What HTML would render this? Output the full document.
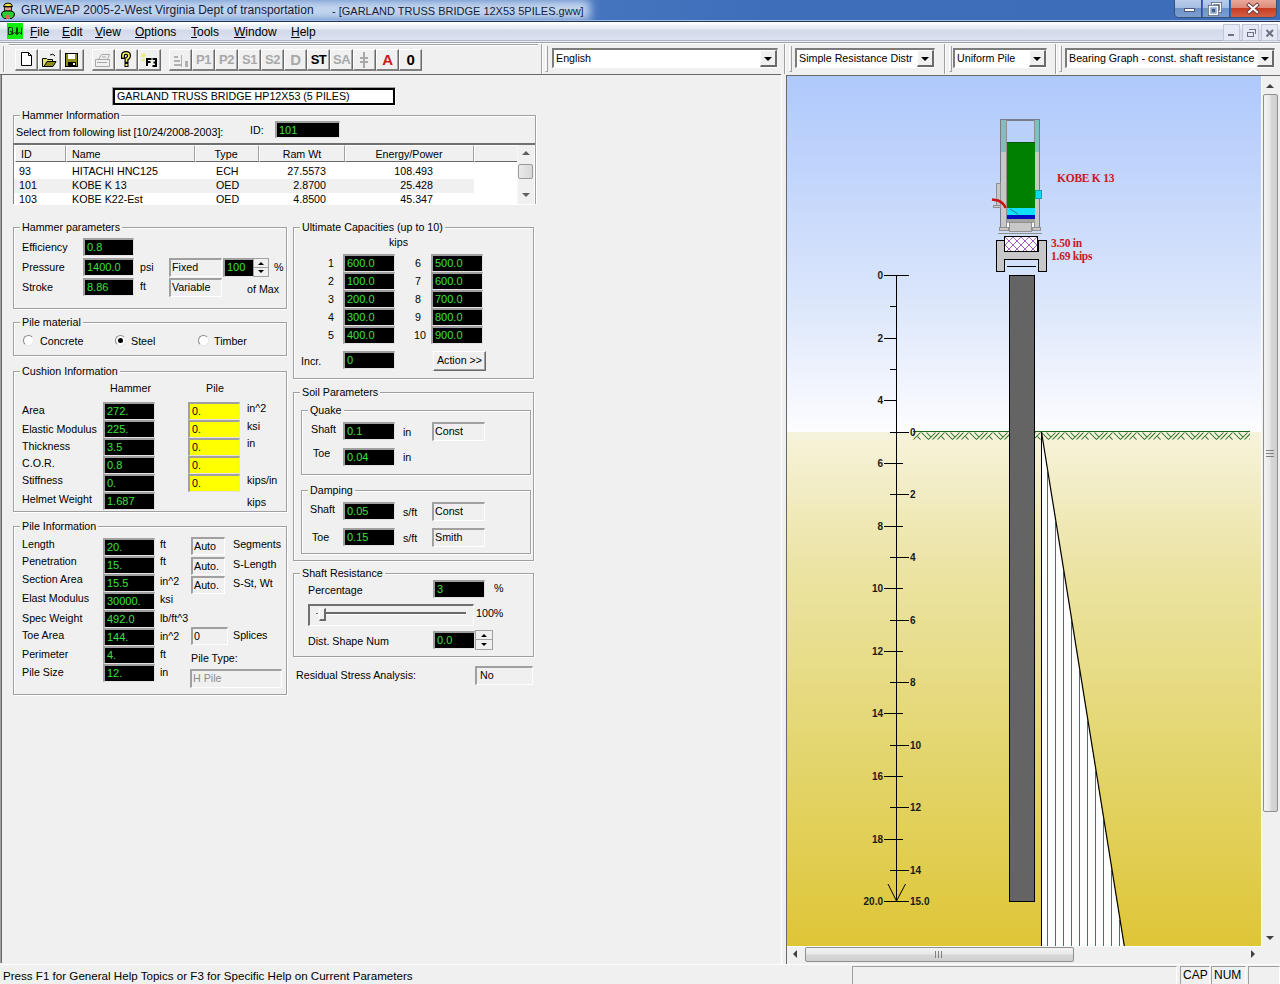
<!DOCTYPE html><html><head><meta charset="utf-8"><style>*{box-sizing:border-box;margin:0;padding:0}
html,body{width:1280px;height:984px;overflow:hidden;background:#f0f0f0;font-family:"Liberation Sans",sans-serif;font-size:10.7px;color:#000}
.a{position:absolute}
.t{position:absolute;white-space:nowrap;line-height:13px}
.btn{position:absolute;width:23px;height:22px;background:#f0f0f0;border-top:1px solid #fff;border-left:1px solid #fff;border-right:1px solid #6a6a6a;border-bottom:2px solid #808080;box-shadow:inset -1px -0px 0 #a8a8a8;font-weight:bold;font-size:14px;text-align:center;line-height:19px;color:#a8a8a8}
.blk{position:absolute;background:#000;color:#3ce13c;border-top:2px solid #a0a0a0;border-left:2px solid #a0a0a0;border-right:1px solid #e3e3e3;border-bottom:1px solid #e3e3e3;padding-left:2px;line-height:14px;font-size:11px;white-space:nowrap}
.yel{position:absolute;background:#ffff00;color:#000;border-top:2px solid #a0a0a0;border-left:2px solid #a0a0a0;border-right:1px solid #e3e3e3;border-bottom:1px solid #e3e3e3;padding-left:2px;line-height:14px;white-space:nowrap}
.gry{position:absolute;background:#f0f0f0;border-top:2px solid #a0a0a0;border-left:2px solid #a0a0a0;border-right:1px solid #fff;border-bottom:1px solid #fff;padding-left:1px;line-height:14px;white-space:nowrap}
.grp{position:absolute;border:1px solid #a0a0a0;box-shadow:1px 1px 0 #fff, inset 1px 1px 0 #fff}
.lg{position:absolute;background:#f0f0f0;padding:0 2px;line-height:13px;white-space:nowrap}
.combo{position:absolute;height:20px;background:#fff;border-top:2px solid #7c7c7c;border-left:2px solid #7c7c7c;border-right:1px solid #f4f4f4;border-bottom:1px solid #fff;font-size:10.7px;line-height:16px;padding-left:2px;white-space:nowrap;overflow:hidden}
.dd{position:absolute;right:0;top:0;width:17px;height:17px;background:#f0f0f0;border-top:1px solid #fff;border-left:1px solid #fff;border-right:2px solid #6a6a6a;border-bottom:2px solid #6a6a6a}
.dd:after{content:"";position:absolute;left:3px;top:6px;border-left:4px solid transparent;border-right:4px solid transparent;border-top:4px solid #000}
.mi{position:absolute;top:25px;font-size:12px;line-height:15px;white-space:nowrap}
.mi u{text-decoration:underline}
</style></head><body>
<div class="a" style="left:0;top:0;width:1280px;height:20px;background:linear-gradient(90deg,#6d93cf 0,#4f7dc4 30%,#3e6eba 60%,#3d6cb8 100%)"></div>
<div class="a" style="left:-20px;top:0px;width:610px;height:20px;background:#c3d5ee;filter:blur(5px)"></div>
<div class="a" style="left:0;top:20px;width:1280px;height:1px;background:#9cbcec"></div>
<div class="a" style="left:0;top:21px;width:1280px;height:1px;background:#26344f"></div>
<svg class="a" style="left:0;top:0" width="18" height="20" viewBox="0 0 18 20"><path d="M3.5 6.5Q4 3 8 3Q12 3 12.5 6.5Z" fill="#f0e040" stroke="#000"/><rect x="4.5" y="7" width="7" height="4" fill="#e8a090" stroke="#000" stroke-width="0.8"/><path d="M1.5 14Q2 11 5 11H11Q14 11 14.5 14Q14.5 17 11.5 18.5H4.5Q1.5 17 1.5 14Z" fill="#22d030" stroke="#000"/><rect x="6" y="15" width="4" height="4" fill="#e06060"/></svg>
<div class="t" style="left:21px;top:3px;font-size:12px;line-height:15px;color:#15203a">GRLWEAP 2005-2-West Virginia Dept of transportation</div>
<div class="t" style="left:332px;top:4px;font-size:11px;line-height:15px;color:#15203a">- [GARLAND TRUSS BRIDGE 12X53 5PILES.gww]</div>
<div class="a" style="left:1174px;top:0;width:103px;height:18px;border:1px solid #3a4f74;border-top:none;border-radius:0 0 5px 5px;overflow:hidden"><div class="a" style="left:0;top:0;width:27px;height:17px;background:linear-gradient(#b9cdea 0,#a6bee2 45%,#6f93c8 50%,#7c9fd2 100%);border-right:1px solid #3a4f74"></div><div class="a" style="left:28px;top:0;width:27px;height:17px;background:linear-gradient(#b9cdea 0,#a6bee2 45%,#6f93c8 50%,#7c9fd2 100%);border-right:1px solid #3a4f74"></div><div class="a" style="left:56px;top:0;width:47px;height:17px;background:linear-gradient(#e9a89a 0,#de8a7a 45%,#c83c22 50%,#d56048 100%)"></div><div class="a" style="left:9px;top:8px;width:11px;height:4px;background:#fff;border:1px solid #4a5a78"></div><svg class="a" style="left:32px;top:1px" width="16" height="15"><rect x="5.5" y="2.5" width="8" height="8" fill="none" stroke="#4a5a78" stroke-width="3"/><rect x="5.5" y="2.5" width="8" height="8" fill="none" stroke="#fff" stroke-width="1.5"/><rect x="2.5" y="5.5" width="8" height="8" fill="#8aa6d2" stroke="#4a5a78" stroke-width="3"/><rect x="2.5" y="5.5" width="8" height="8" fill="#8aa6d2" stroke="#fff" stroke-width="1.5"/><rect x="5" y="8" width="3" height="3" fill="#4a5a78"/></svg><svg class="a" style="left:70px;top:1px" width="16" height="15"><path d="M4 4L12 11M12 4L4 11" stroke="#6a3a3a" stroke-width="4" stroke-linecap="square"/><path d="M4 4L12 11M12 4L4 11" stroke="#fff" stroke-width="2.2" stroke-linecap="square"/></svg></div>
<div class="a" style="left:0;top:22px;width:1280px;height:18px;background:linear-gradient(#fff 0,#fff 2px,#eef2fa 3px,#e6eaf4 7px,#d4d9e9 8px,#dde2f3 100%)"></div>
<div class="a" style="left:0;top:40px;width:1280px;height:1px;background:#b0b4c2"></div>
<div class="a" style="left:0;top:41px;width:1280px;height:1px;background:#eceef4"></div>
<div class="a" style="left:0;top:42px;width:1280px;height:1px;background:#a0a0a8"></div>
<svg class="a" style="left:7px;top:23px" width="16" height="16" viewBox="0 0 16 16"><rect width="16" height="16" fill="#10ee10"/><path d="M4.5 4.5H1.5V11.5H4.5V8.5H3M5.5 4.5V11.5L7.5 9L9.5 11.5V4.5M10.5 4.5V11.5L12.5 9L14.5 11.5V4.5" fill="none" stroke="#0a3a0a" stroke-width="1"/></svg>
<div class="mi" style="left:30px"><u>F</u>ile</div>
<div class="mi" style="left:62px"><u>E</u>dit</div>
<div class="mi" style="left:95px"><u>V</u>iew</div>
<div class="mi" style="left:135px"><u>O</u>ptions</div>
<div class="mi" style="left:191px"><u>T</u>ools</div>
<div class="mi" style="left:234px"><u>W</u>indow</div>
<div class="mi" style="left:291px"><u>H</u>elp</div>
<div class="a" style="left:1223px;top:24px;width:17px;height:17px;border:1px solid #c0c8d8;background:#e4e9f5"></div>
<div class="a" style="left:1242px;top:24px;width:17px;height:17px;border:1px solid #c0c8d8;background:#e4e9f5"></div>
<div class="a" style="left:1261px;top:24px;width:17px;height:17px;border:1px solid #c0c8d8;background:#e4e9f5"></div>
<div class="a" style="left:1228px;top:34px;width:6px;height:2px;background:#6a7283"></div>
<div class="a" style="left:1247px;top:32px;width:7px;height:5px;border:1px solid #6a7283"></div><div class="a" style="left:1249px;top:29px;width:7px;height:5px;border-top:1px solid #6a7283;border-right:1px solid #6a7283"></div>
<svg class="a" style="left:1263px;top:26px" width="14" height="14"><path d="M3.5 4L10 10.5M10 4L3.5 10.5" stroke="#6a7283" stroke-width="2"/></svg>
<div class="a" style="left:0;top:43px;width:1280px;height:31px;background:#f0f0f0;border-top:1px solid #fff"></div>
<div class="a" style="left:9px;top:44px;width:529px;height:2px;border-top:1px solid #a0a0a0;border-bottom:1px solid #fff"></div>
<div class="a" style="left:3px;top:46px;width:2px;height:26px;border-left:1px solid #a0a0a0;border-right:1px solid #fff"></div>
<div class="btn" style="left:15px;top:49px"></div>
<div class="btn" style="left:38px;top:49px"></div>
<div class="btn" style="left:61px;top:49px"></div>
<div class="btn" style="left:92px;top:49px"></div>
<div class="btn" style="left:115px;top:49px"></div>
<div class="btn" style="left:138px;top:49px"></div>
<div class="btn" style="left:169px;top:49px;color:#a8a8a8;font-size:15px;letter-spacing:-0.5px"></div>
<div class="btn" style="left:192px;top:49px;color:#a8a8a8;font-size:13px;letter-spacing:-0.5px">P1</div>
<div class="btn" style="left:215px;top:49px;color:#a8a8a8;font-size:13px;letter-spacing:-0.5px">P2</div>
<div class="btn" style="left:238px;top:49px;color:#a8a8a8;font-size:13px;letter-spacing:-0.5px">S1</div>
<div class="btn" style="left:261px;top:49px;color:#a8a8a8;font-size:13px;letter-spacing:-0.5px">S2</div>
<div class="btn" style="left:284px;top:49px;color:#a8a8a8;font-size:15px;letter-spacing:-0.5px">D</div>
<div class="btn" style="left:307px;top:49px;color:#000;font-size:13px;letter-spacing:-0.5px">ST</div>
<div class="btn" style="left:330px;top:49px;color:#a8a8a8;font-size:13px;letter-spacing:-0.5px">SA</div>
<div class="btn" style="left:353px;top:49px;color:#a8a8a8;font-size:15px;letter-spacing:-0.5px"></div>
<div class="btn" style="left:376px;top:49px;color:#d01818;font-size:15px;letter-spacing:-0.5px">A</div>
<div class="btn" style="left:399px;top:49px;color:#000;font-size:15px;letter-spacing:-0.5px">0</div>
<svg class="a" style="left:15px;top:49px" width="184" height="22" viewBox="0 0 184 22"><path d="M6.5 3.5H13.5L16.5 6.5V16.5H6.5Z" fill="#fff" stroke="#000"/><path d="M13.5 3.5V6.5H16.5" fill="none" stroke="#000"/><path d="M27.5 9.5h4l1 1h5v7h-10z" fill="#e0e07c" stroke="#000"/><path d="M29 17.5l3-5h9l-3 5z" fill="#8c8c1c" stroke="#000"/><path d="M35 6q3-2 5 1" stroke="#000" fill="none"/><rect x="50.5" y="4.5" width="12" height="13" fill="#8c8c1c" stroke="#000"/><rect x="53" y="5" width="7" height="5" fill="#fff"/><rect x="53" y="13" width="8" height="4" fill="#000"/><rect x="58" y="14" width="2" height="2" fill="#fff"/><g fill="none" stroke="#a8a8a8" stroke-width="1"><path d="M83.5 10.5L86.5 5.5H94.5L92.5 10.5"/><path d="M80.5 10.5H94.5V17.5H80.5Z"/><path d="M82 13.5H92M87 8H91"/></g><path d="M108 8V6.5Q108 4 111 4Q114 4 114 6.5Q114 9 111.5 10V12" fill="none" stroke="#000" stroke-width="4" stroke-linecap="square"/><rect x="109.5" y="14" width="4" height="4" fill="#000"/><path d="M108 8V6.5Q108 4 111 4Q114 4 114 6.5Q114 9 111.5 10V12" fill="none" stroke="#f4f460" stroke-width="1.6" stroke-linecap="square"/><rect x="110.5" y="15" width="2" height="2" fill="#f4f460"/><circle cx="128.5" cy="6.5" r="2.2" fill="#e8ec60" opacity="0.8"/><circle cx="128.5" cy="11" r="1.6" fill="#e8ec60" opacity="0.8"/><path d="M132 17V10H136.5M132 13H135.5" fill="none" stroke="#000" stroke-width="2"/><path d="M137.5 10H141V17H137.5M138.5 13.5H141" fill="none" stroke="#000" stroke-width="2"/><rect x="159" y="7" width="4" height="2" fill="#b0b0b0"/><rect x="159" y="11" width="6" height="2" fill="#b0b0b0"/><rect x="159" y="15" width="8" height="2" fill="#b0b0b0"/><rect x="166" y="6" width="1" height="12" fill="#b0b0b0"/><rect x="170" y="12" width="3" height="6" fill="#b0b0b0"/></svg>
<svg class="a" style="left:353px;top:49px" width="23" height="22"><rect x="10" y="3" width="2" height="16" fill="#a8a8a8"/><rect x="7" y="8" width="8" height="2" fill="#a8a8a8"/><rect x="7" y="12" width="8" height="2" fill="#a8a8a8"/></svg>
<div class="a" style="left:541px;top:44px;width:2px;height:30px;border-left:1px solid #a0a0a0;border-right:1px solid #fff"></div>
<div class="a" style="left:545px;top:46px;width:3px;height:26px;border-left:1px solid #fff;border-right:1px solid #a0a0a0;border-bottom:1px solid #a0a0a0"></div>
<div class="a" style="left:784px;top:44px;width:2px;height:30px;border-left:1px solid #a0a0a0;border-right:1px solid #fff"></div>
<div class="a" style="left:789px;top:46px;width:3px;height:26px;border-left:1px solid #fff;border-right:1px solid #a0a0a0;border-bottom:1px solid #a0a0a0"></div>
<div class="a" style="left:944px;top:44px;width:2px;height:30px;border-left:1px solid #a0a0a0;border-right:1px solid #fff"></div>
<div class="a" style="left:949px;top:46px;width:3px;height:26px;border-left:1px solid #fff;border-right:1px solid #a0a0a0;border-bottom:1px solid #a0a0a0"></div>
<div class="a" style="left:1055px;top:44px;width:2px;height:30px;border-left:1px solid #a0a0a0;border-right:1px solid #fff"></div>
<div class="a" style="left:1059px;top:46px;width:3px;height:26px;border-left:1px solid #fff;border-right:1px solid #a0a0a0;border-bottom:1px solid #a0a0a0"></div>
<div class="combo" style="left:552px;top:48px;width:226px">English<div class="dd"></div></div>
<div class="combo" style="left:795px;top:48px;width:140px">Simple Resistance Distr<div class="dd"></div></div>
<div class="combo" style="left:953px;top:48px;width:94px">Uniform Pile<div class="dd"></div></div>
<div class="combo" style="left:1065px;top:48px;width:210px">Bearing Graph - const. shaft resistance<div class="dd"></div></div>
<div class="a" style="left:0;top:74px;width:781px;height:1px;background:#696969"></div>
<div class="a" style="left:0;top:964px;width:1280px;height:20px;background:#f0f0f0;border-top:1px solid #fff"></div>
<div class="t" style="left:3px;top:968px;font-size:11.6px;line-height:15px">Press F1 for General Help Topics or F3 for Specific Help on Current Parameters</div>
<div class="a" style="left:852px;top:966px;width:325px;height:18px;border-top:1px solid #a0a0a0;border-left:1px solid #a0a0a0;border-right:1px solid #fff;font-size:12px;line-height:17px;padding-left:2px"></div>
<div class="a" style="left:1180px;top:966px;width:30px;height:18px;border-top:1px solid #a0a0a0;border-left:1px solid #a0a0a0;border-right:1px solid #fff;font-size:12px;line-height:17px;padding-left:2px">CAP</div>
<div class="a" style="left:1211px;top:966px;width:35px;height:18px;border-top:1px solid #a0a0a0;border-left:1px solid #a0a0a0;border-right:1px solid #fff;font-size:12px;line-height:17px;padding-left:2px">NUM</div>
<div class="a" style="left:1248px;top:966px;width:32px;height:18px;border-top:1px solid #a0a0a0;border-left:1px solid #a0a0a0;border-right:1px solid #fff;font-size:12px;line-height:17px;padding-left:2px"></div>
<div class="a" style="left:0;top:75px;width:1px;height:888px;background:#a0a0a0"></div>
<div class="a" style="left:1px;top:75px;width:1px;height:888px;background:#696969"></div>
<div class="a" style="left:112px;top:87px;width:284px;height:19px;border-top:1px solid #a0a0a0;border-left:1px solid #a0a0a0;border-right:1px solid #fff;border-bottom:1px solid #fff"><div class="a" style="left:0;top:0;width:282px;height:17px;background:#fff;border:2px solid #000;border-top-width:2px;padding-left:2px;line-height:13px;white-space:nowrap">GARLAND TRUSS BRIDGE HP12X53 (5 PILES)</div></div>
<div class="grp" style="left:13px;top:115px;width:523px;height:89px"></div>
<div class="lg" style="left:20px;top:109px">Hammer Information</div>
<div class="t" style="left:16px;top:125.6px;">Select from following list [10/24/2008-2003]:</div>
<div class="t" style="left:250px;top:124px;">ID:</div>
<div class="blk" style="left:275px;top:121px;width:65px;height:17px;">101</div>
<div class="a" style="left:13px;top:143px;width:522px;height:61px;background:#fff;border-top:2px solid #707070;border-left:1px solid #808080;overflow:hidden"><div class="a" style="left:0;top:34px;width:460px;height:14px;background:#f0f0f0"></div></div>
<div class="a" style="left:15px;top:145px;width:51px;height:17px;background:#f0f0f0;border-top:1px solid #fff;border-left:1px solid #fff;border-right:1px solid #a0a0a0;border-bottom:1px solid #696969"></div>
<div class="t" style="left:21px;top:148px;">ID</div>
<div class="a" style="left:66px;top:145px;width:129px;height:17px;background:#f0f0f0;border-top:1px solid #fff;border-left:1px solid #fff;border-right:1px solid #a0a0a0;border-bottom:1px solid #696969"></div>
<div class="t" style="left:72px;top:148px;">Name</div>
<div class="a" style="left:195px;top:145px;width:64px;height:17px;background:#f0f0f0;border-top:1px solid #fff;border-left:1px solid #fff;border-right:1px solid #a0a0a0;border-bottom:1px solid #696969"></div>
<div class="t" style="left:226px;top:148px;transform:translateX(-50%)">Type</div>
<div class="a" style="left:259px;top:145px;width:86px;height:17px;background:#f0f0f0;border-top:1px solid #fff;border-left:1px solid #fff;border-right:1px solid #a0a0a0;border-bottom:1px solid #696969"></div>
<div class="t" style="left:302px;top:148px;transform:translateX(-50%)">Ram Wt</div>
<div class="a" style="left:345px;top:145px;width:129px;height:17px;background:#f0f0f0;border-top:1px solid #fff;border-left:1px solid #fff;border-right:1px solid #a0a0a0;border-bottom:1px solid #696969"></div>
<div class="t" style="left:409px;top:148px;transform:translateX(-50%)">Energy/Power</div>
<div class="a" style="left:474px;top:145px;width:44px;height:17px;background:#f0f0f0;border-top:1px solid #fff;border-left:1px solid #fff;border-right:1px solid #a0a0a0;border-bottom:1px solid #696969"></div>
<div class="t" style="left:19px;top:165px;">93</div>
<div class="t" style="left:72px;top:165px;">HITACHI HNC125</div>
<div class="t" style="left:216px;top:165px;">ECH</div>
<div class="t" style="left:0;top:165px;width:326px;text-align:right">27.5573</div>
<div class="t" style="left:0;top:165px;width:433px;text-align:right">108.493</div>
<div class="t" style="left:19px;top:179px;">101</div>
<div class="t" style="left:72px;top:179px;">KOBE K 13</div>
<div class="t" style="left:216px;top:179px;">OED</div>
<div class="t" style="left:0;top:179px;width:326px;text-align:right">2.8700</div>
<div class="t" style="left:0;top:179px;width:433px;text-align:right">25.428</div>
<div class="t" style="left:19px;top:193px;">103</div>
<div class="t" style="left:72px;top:193px;">KOBE K22-Est</div>
<div class="t" style="left:216px;top:193px;">OED</div>
<div class="t" style="left:0;top:193px;width:326px;text-align:right">4.8500</div>
<div class="t" style="left:0;top:193px;width:433px;text-align:right">45.347</div>
<div class="a" style="left:517px;top:145px;width:17px;height:59px;background:#f0f0f0;border-left:1px solid #f8f8f8"></div>
<div class="a" style="left:522px;top:151px;width:0;height:0;border-left:4px solid transparent;border-right:4px solid transparent;border-bottom:4px solid #606060"></div>
<div class="a" style="left:518px;top:164px;width:15px;height:15px;background:linear-gradient(90deg,#eaeaea,#d8d8d8);border:1px solid #9a9a9a;border-radius:2px"></div>
<div class="a" style="left:522px;top:193px;width:0;height:0;border-left:4px solid transparent;border-right:4px solid transparent;border-top:4px solid #606060"></div>
<div class="grp" style="left:13px;top:227px;width:274px;height:82px"></div>
<div class="lg" style="left:20px;top:221px">Hammer parameters</div>
<div class="t" style="left:22px;top:241px;">Efficiency</div>
<div class="blk" style="left:83px;top:238px;width:51px;height:18px;">0.8</div>
<div class="t" style="left:22px;top:261.4px;">Pressure</div>
<div class="blk" style="left:83px;top:258px;width:51px;height:18px;">1400.0</div>
<div class="t" style="left:140px;top:261.4px;">psi</div>
<div class="t" style="left:22px;top:281.3px;">Stroke</div>
<div class="blk" style="left:83px;top:278px;width:51px;height:18px;">8.86</div>
<div class="t" style="left:140px;top:279.7px;">ft</div>
<div class="gry" style="left:169px;top:258px;width:53px;height:19px;">Fixed</div>
<div class="gry" style="left:169px;top:278px;width:53px;height:19px;">Variable</div>
<div class="blk" style="left:223px;top:258px;width:31px;height:19px;">100</div>
<div class="a" style="left:253px;top:258px;width:16px;height:19px;background:#f0f0f0;border:1px solid #a0a0a0"></div>
<div class="a" style="left:254px;top:267px;width:14px;height:1px;background:#a0a0a0"></div>
<div class="a" style="left:258px;top:262px;border-left:3px solid transparent;border-right:3px solid transparent;border-bottom:3px solid #000"></div>
<div class="a" style="left:258px;top:270px;border-left:3px solid transparent;border-right:3px solid transparent;border-top:3px solid #000"></div>
<div class="t" style="left:274px;top:261px;">%</div>
<div class="t" style="left:247px;top:282.7px;">of Max</div>
<div class="grp" style="left:13px;top:322px;width:274px;height:34px"></div>
<div class="lg" style="left:20px;top:316px">Pile material</div>
<div class="a" style="left:23px;top:335px;width:11px;height:11px;border-radius:50%;background:#fff;border:1px solid;border-color:#8a8a8a #e8e8e8 #e8e8e8 #8a8a8a;transform:rotate(0deg)"></div>
<div class="t" style="left:40px;top:334.8px;">Concrete</div>
<div class="a" style="left:115px;top:335px;width:11px;height:11px;border-radius:50%;background:#fff;border:1px solid;border-color:#8a8a8a #e8e8e8 #e8e8e8 #8a8a8a;transform:rotate(0deg)"></div>
<div class="a" style="left:118px;top:338px;width:5px;height:5px;border-radius:50%;background:#000"></div>
<div class="t" style="left:131px;top:334.8px;">Steel</div>
<div class="a" style="left:198px;top:335px;width:11px;height:11px;border-radius:50%;background:#fff;border:1px solid;border-color:#8a8a8a #e8e8e8 #e8e8e8 #8a8a8a;transform:rotate(0deg)"></div>
<div class="t" style="left:214px;top:334.8px;">Timber</div>
<div class="grp" style="left:13px;top:371px;width:274px;height:141px"></div>
<div class="lg" style="left:20px;top:365px">Cushion Information</div>
<div class="t" style="left:110px;top:381.6px;">Hammer</div>
<div class="t" style="left:206px;top:381.6px;">Pile</div>
<div class="t" style="left:22px;top:404.4px;">Area</div>
<div class="blk" style="left:103px;top:402px;width:52px;height:18px;">272.</div>
<div class="yel" style="left:188px;top:402px;width:52px;height:18px;">0.</div>
<div class="t" style="left:22px;top:422.6px;">Elastic Modulus</div>
<div class="blk" style="left:103px;top:420px;width:52px;height:18px;">225.</div>
<div class="yel" style="left:188px;top:420px;width:52px;height:18px;">0.</div>
<div class="t" style="left:22px;top:440.2px;">Thickness</div>
<div class="blk" style="left:103px;top:438px;width:52px;height:18px;">3.5</div>
<div class="yel" style="left:188px;top:438px;width:52px;height:18px;">0.</div>
<div class="t" style="left:22px;top:456.6px;">C.O.R.</div>
<div class="blk" style="left:103px;top:456px;width:52px;height:18px;">0.8</div>
<div class="yel" style="left:188px;top:456px;width:52px;height:18px;">0.</div>
<div class="t" style="left:22px;top:474.2px;">Stiffness</div>
<div class="blk" style="left:103px;top:474px;width:52px;height:18px;">0.</div>
<div class="yel" style="left:188px;top:474px;width:52px;height:18px;">0.</div>
<div class="t" style="left:22px;top:493.4px;">Helmet Weight</div>
<div class="blk" style="left:103px;top:492px;width:52px;height:18px;">1.687</div>
<div class="t" style="left:247px;top:402px;">in^2</div>
<div class="t" style="left:247px;top:419.6px;">ksi</div>
<div class="t" style="left:247px;top:437.2px;">in</div>
<div class="t" style="left:247px;top:474.2px;">kips/in</div>
<div class="t" style="left:247px;top:495.8px;">kips</div>
<div class="grp" style="left:13px;top:526px;width:274px;height:169px"></div>
<div class="lg" style="left:20px;top:520px">Pile Information</div>
<div class="t" style="left:22px;top:537.8px;">Length</div>
<div class="blk" style="left:103px;top:538px;width:52px;height:18px;">20.</div>
<div class="t" style="left:160px;top:537.8px;">ft</div>
<div class="t" style="left:22px;top:555.4px;">Penetration</div>
<div class="blk" style="left:103px;top:556px;width:52px;height:18px;">15.</div>
<div class="t" style="left:160px;top:555.4px;">ft</div>
<div class="t" style="left:22px;top:573.4px;">Section Area</div>
<div class="blk" style="left:103px;top:574px;width:52px;height:18px;">15.5</div>
<div class="t" style="left:160px;top:575.3px;">in^2</div>
<div class="t" style="left:22px;top:591.7px;">Elast Modulus</div>
<div class="blk" style="left:103px;top:592px;width:52px;height:18px;">30000.</div>
<div class="t" style="left:160px;top:592.9px;">ksi</div>
<div class="t" style="left:22px;top:611.6px;">Spec Weight</div>
<div class="blk" style="left:103px;top:610px;width:52px;height:18px;">492.0</div>
<div class="t" style="left:160px;top:611.6px;">lb/ft^3</div>
<div class="t" style="left:22px;top:628.5px;">Toe Area</div>
<div class="blk" style="left:103px;top:628px;width:52px;height:18px;">144.</div>
<div class="t" style="left:160px;top:630.4px;">in^2</div>
<div class="t" style="left:22px;top:648.4px;">Perimeter</div>
<div class="blk" style="left:103px;top:646px;width:52px;height:18px;">4.</div>
<div class="t" style="left:160px;top:648.4px;">ft</div>
<div class="t" style="left:22px;top:666.2px;">Pile Size</div>
<div class="blk" style="left:103px;top:664px;width:52px;height:18px;">12.</div>
<div class="t" style="left:160px;top:666.2px;">in</div>
<div class="gry" style="left:191px;top:537px;width:34px;height:18px;">Auto</div>
<div class="t" style="left:233px;top:537.8px;">Segments</div>
<div class="gry" style="left:191px;top:557px;width:34px;height:18px;">Auto.</div>
<div class="t" style="left:233px;top:557.7px;">S-Length</div>
<div class="gry" style="left:191px;top:576px;width:34px;height:18px;">Auto.</div>
<div class="t" style="left:233px;top:576.5px;">S-St, Wt</div>
<div class="gry" style="left:191px;top:627px;width:37px;height:18px;">0</div>
<div class="t" style="left:233px;top:628.7px;">Splices</div>
<div class="t" style="left:191px;top:651.5px;">Pile Type:</div>
<div class="gry" style="left:190px;top:669px;width:92px;height:19px;color:#8c8c8c">H Pile</div>
<div class="grp" style="left:293px;top:227px;width:241px;height:152px"></div>
<div class="lg" style="left:300px;top:221px">Ultimate Capacities (up to 10)</div>
<div class="t" style="left:389px;top:235.5px;">kips</div>
<div class="t" style="left:328px;top:256.8px;">1</div>
<div class="blk" style="left:343px;top:254px;width:52px;height:18px;">600.0</div>
<div class="t" style="left:415px;top:256.8px;">6</div>
<div class="blk" style="left:431px;top:254px;width:52px;height:18px;">500.0</div>
<div class="t" style="left:328px;top:274.8px;">2</div>
<div class="blk" style="left:343px;top:272px;width:52px;height:18px;">100.0</div>
<div class="t" style="left:415px;top:274.8px;">7</div>
<div class="blk" style="left:431px;top:272px;width:52px;height:18px;">600.0</div>
<div class="t" style="left:328px;top:292.8px;">3</div>
<div class="blk" style="left:343px;top:290px;width:52px;height:18px;">200.0</div>
<div class="t" style="left:415px;top:292.8px;">8</div>
<div class="blk" style="left:431px;top:290px;width:52px;height:18px;">700.0</div>
<div class="t" style="left:328px;top:310.8px;">4</div>
<div class="blk" style="left:343px;top:308px;width:52px;height:18px;">300.0</div>
<div class="t" style="left:415px;top:310.8px;">9</div>
<div class="blk" style="left:431px;top:308px;width:52px;height:18px;">800.0</div>
<div class="t" style="left:328px;top:328.8px;">5</div>
<div class="blk" style="left:343px;top:326px;width:52px;height:18px;">400.0</div>
<div class="t" style="left:414px;top:328.8px;">10</div>
<div class="blk" style="left:431px;top:326px;width:52px;height:18px;">900.0</div>
<div class="t" style="left:301px;top:355px;">Incr.</div>
<div class="blk" style="left:343px;top:351px;width:52px;height:18px;">0</div>
<div class="a" style="left:433px;top:351px;width:53px;height:20px;background:#f0f0f0;border-top:1px solid #fff;border-left:1px solid #fff;border-right:1px solid #696969;border-bottom:1px solid #696969;box-shadow:inset -1px -1px 0 #a0a0a0;text-align:center;line-height:17px">Action &gt;&gt;</div>
<div class="grp" style="left:293px;top:392px;width:241px;height:169px"></div>
<div class="lg" style="left:300px;top:386px">Soil Parameters</div>
<div class="grp" style="left:301px;top:410px;width:230px;height:65px"></div>
<div class="lg" style="left:308px;top:404px">Quake</div>
<div class="t" style="left:311px;top:422.8px;">Shaft</div>
<div class="blk" style="left:343px;top:422px;width:52px;height:18px;">0.1</div>
<div class="t" style="left:403px;top:425.9px;">in</div>
<div class="gry" style="left:432px;top:422px;width:53px;height:19px;">Const</div>
<div class="t" style="left:313px;top:446.8px;">Toe</div>
<div class="blk" style="left:343px;top:448px;width:52px;height:18px;">0.04</div>
<div class="t" style="left:403px;top:450.8px;">in</div>
<div class="grp" style="left:301px;top:490px;width:230px;height:64px"></div>
<div class="lg" style="left:308px;top:484px">Damping</div>
<div class="t" style="left:310px;top:503px;">Shaft</div>
<div class="blk" style="left:343px;top:502px;width:52px;height:18px;">0.05</div>
<div class="t" style="left:403px;top:505.70000000000005px;">s/ft</div>
<div class="gry" style="left:432px;top:502px;width:53px;height:19px;">Const</div>
<div class="t" style="left:312px;top:530.5px;">Toe</div>
<div class="blk" style="left:343px;top:528px;width:52px;height:18px;">0.15</div>
<div class="t" style="left:403px;top:531.5px;">s/ft</div>
<div class="gry" style="left:432px;top:528px;width:53px;height:19px;">Smith</div>
<div class="grp" style="left:293px;top:573px;width:241px;height:84px"></div>
<div class="lg" style="left:300px;top:567px">Shaft Resistance</div>
<div class="t" style="left:308px;top:583.6px;">Percentage</div>
<div class="blk" style="left:433px;top:580px;width:52px;height:18px;">3</div>
<div class="t" style="left:494px;top:581.6px;">%</div>
<div class="a" style="left:308px;top:604px;width:166px;height:22px;border-top:2px solid #707070;border-left:2px solid #707070;border-right:1px solid #fff;border-bottom:1px solid #fff"></div>
<div class="a" style="left:316px;top:612px;width:150px;height:3px;border-top:2px solid #6a6a6a;border-bottom:1px solid #fff"></div>
<div class="a" style="left:316px;top:612px;width:3px;height:2px;background:#f0f0f0"></div>
<div class="a" style="left:316px;top:613px;width:2px;height:1px;background:#6a6a6a"></div>
<div class="a" style="left:319px;top:608px;width:7px;height:13px;background:#f0f0f0;border-top:1px solid #fff;border-left:1px solid #fff;border-right:2px solid #6a6a6a;border-bottom:2px solid #6a6a6a"></div>
<div class="t" style="left:476px;top:606.5px;">100%</div>
<div class="t" style="left:308px;top:635.4px;">Dist. Shape Num</div>
<div class="blk" style="left:433px;top:631px;width:42px;height:18px;">0.0</div>
<div class="a" style="left:475px;top:630px;width:18px;height:20px;background:#f0f0f0;border:1px solid #a0a0a0"></div>
<div class="a" style="left:476px;top:639px;width:16px;height:1px;background:#a0a0a0"></div>
<div class="a" style="left:481px;top:634px;border-left:3px solid transparent;border-right:3px solid transparent;border-bottom:3px solid #000"></div>
<div class="a" style="left:481px;top:643px;border-left:3px solid transparent;border-right:3px solid transparent;border-top:3px solid #000"></div>
<div class="t" style="left:296px;top:668.9px;">Residual Stress Analysis:</div>
<div class="gry" style="left:475px;top:666px;width:58px;height:19px;padding-left:3px">No</div>
<div class="a" style="left:781px;top:75px;width:5px;height:889px;background:#f0f0f0;border-left:1px solid #fff"></div>
<div class="a" style="left:786px;top:75px;width:494px;height:889px;border-top:1px solid #696969;border-left:1px solid #696969;background:#f0f0f0"></div>
<svg class="a" style="left:787px;top:76px" width="474" height="870" viewBox="787 76 474 870" shape-rendering="crispEdges"><defs><linearGradient id="sky" x1="0" y1="0" x2="0" y2="1"><stop offset="0" stop-color="#afc9fc"/><stop offset="0.3" stop-color="#c3d6fb"/><stop offset="0.63" stop-color="#dbe6fb"/><stop offset="1" stop-color="#fdfdff"/></linearGradient><linearGradient id="soil" x1="0" y1="0" x2="0" y2="1"><stop offset="0" stop-color="#f6f3dc"/><stop offset="0.25" stop-color="#ece4a6"/><stop offset="0.64" stop-color="#e3d56c"/><stop offset="1" stop-color="#dfc637"/></linearGradient><pattern id="hatch" x="912" y="432" width="24" height="9" patternUnits="userSpaceOnUse"><path d="M-3.5 7.5L3.5 0.5M20.5 7.5L27.5 0.5M1.5 7.5L8.5 0.5M5.5 4.5L8.5 7.5M9.5 0.5L16.5 7.5M14.5 0.5L19.5 5.5M16.5 7.5L23.5 0.5M-7.5 7.5L-0.5 0.5" stroke="#1f6a1f" stroke-width="1.05" fill="none" shape-rendering="geometricPrecision"/></pattern><pattern id="xh" x="1005" y="237" width="8" height="8" patternUnits="userSpaceOnUse"><path d="M0 0L8 8M8 0L0 8" stroke="#a060c0" stroke-width="1"/></pattern></defs><rect x="787" y="76" width="474" height="356" fill="url(#sky)"/><rect x="787" y="432" width="474" height="514" fill="url(#soil)"/><rect x="913" y="432" width="337" height="9" fill="url(#hatch)"/><line x1="913" y1="431.5" x2="1250" y2="431.5" stroke="#1d661d" stroke-width="1"/><g stroke="#000" stroke-width="1"><line x1="896.5" y1="275" x2="896.5" y2="901.5"/><line x1="884" y1="275.5" x2="909" y2="275.5"/><line x1="890" y1="306.5" x2="896.5" y2="306.5"/><line x1="884" y1="338.5" x2="896.5" y2="338.5"/><line x1="890" y1="369.5" x2="896.5" y2="369.5"/><line x1="884" y1="400.5" x2="896.5" y2="400.5"/><line x1="890" y1="432.5" x2="896.5" y2="432.5"/><line x1="884" y1="463.5" x2="896.5" y2="463.5"/><line x1="890" y1="494.5" x2="896.5" y2="494.5"/><line x1="884" y1="526.5" x2="896.5" y2="526.5"/><line x1="890" y1="557.5" x2="896.5" y2="557.5"/><line x1="884" y1="588.5" x2="896.5" y2="588.5"/><line x1="890" y1="620.5" x2="896.5" y2="620.5"/><line x1="884" y1="651.5" x2="896.5" y2="651.5"/><line x1="890" y1="682.5" x2="896.5" y2="682.5"/><line x1="884" y1="713.5" x2="896.5" y2="713.5"/><line x1="890" y1="745.5" x2="896.5" y2="745.5"/><line x1="884" y1="776.5" x2="896.5" y2="776.5"/><line x1="890" y1="807.5" x2="896.5" y2="807.5"/><line x1="884" y1="839.5" x2="896.5" y2="839.5"/><line x1="890" y1="870.5" x2="896.5" y2="870.5"/><line x1="884" y1="901.5" x2="909" y2="901.5"/><line x1="896.5" y1="432.5" x2="909" y2="432.5"/><line x1="896.5" y1="463.5" x2="903" y2="463.5"/><line x1="896.5" y1="494.5" x2="909" y2="494.5"/><line x1="896.5" y1="526.5" x2="903" y2="526.5"/><line x1="896.5" y1="557.5" x2="909" y2="557.5"/><line x1="896.5" y1="588.5" x2="903" y2="588.5"/><line x1="896.5" y1="620.5" x2="909" y2="620.5"/><line x1="896.5" y1="651.5" x2="903" y2="651.5"/><line x1="896.5" y1="682.5" x2="909" y2="682.5"/><line x1="896.5" y1="713.5" x2="903" y2="713.5"/><line x1="896.5" y1="745.5" x2="909" y2="745.5"/><line x1="896.5" y1="776.5" x2="903" y2="776.5"/><line x1="896.5" y1="807.5" x2="909" y2="807.5"/><line x1="896.5" y1="839.5" x2="903" y2="839.5"/><line x1="896.5" y1="870.5" x2="909" y2="870.5"/></g><path d="M888 884L896.5 901L905.5 884" stroke="#000" fill="none" shape-rendering="auto"/><g font-family="Liberation Sans" font-weight="bold" font-size="10" fill="#1a1a1a" shape-rendering="auto"><text x="883" y="279" text-anchor="end">0</text><text x="883" y="342" text-anchor="end">2</text><text x="883" y="404" text-anchor="end">4</text><text x="883" y="467" text-anchor="end">6</text><text x="883" y="530" text-anchor="end">8</text><text x="883" y="592" text-anchor="end">10</text><text x="883" y="655" text-anchor="end">12</text><text x="883" y="717" text-anchor="end">14</text><text x="883" y="780" text-anchor="end">16</text><text x="883" y="843" text-anchor="end">18</text><text x="883" y="905" text-anchor="end">20.0</text><text x="910" y="436">0</text><text x="910" y="498">2</text><text x="910" y="561">4</text><text x="910" y="624">6</text><text x="910" y="686">8</text><text x="910" y="749">10</text><text x="910" y="811">12</text><text x="910" y="874">14</text><text x="910" y="905">15.0</text></g><rect x="1009.5" y="275.5" width="25" height="626" fill="#646464" stroke="#000"/><polygon points="1041,432 1123.8,946 1041,946" fill="#fff"/><line x1="1047.5" y1="472.4" x2="1047.5" y2="946" stroke="#2d7a78" stroke-width="1"/><line x1="1055.5" y1="522.1" x2="1055.5" y2="946" stroke="#2d7a78" stroke-width="1"/><line x1="1063.5" y1="571.8" x2="1063.5" y2="946" stroke="#2d7a78" stroke-width="1"/><line x1="1071.5" y1="621.4" x2="1071.5" y2="946" stroke="#2d7a78" stroke-width="1"/><line x1="1079.5" y1="671.1" x2="1079.5" y2="946" stroke="#2d7a78" stroke-width="1"/><line x1="1087.5" y1="720.8" x2="1087.5" y2="946" stroke="#2d7a78" stroke-width="1"/><line x1="1095.5" y1="770.5" x2="1095.5" y2="946" stroke="#2d7a78" stroke-width="1"/><line x1="1103.5" y1="820.2" x2="1103.5" y2="946" stroke="#2d7a78" stroke-width="1"/><line x1="1111.5" y1="869.9" x2="1111.5" y2="946" stroke="#2d7a78" stroke-width="1"/><line x1="1119.5" y1="919.6" x2="1119.5" y2="946" stroke="#2d7a78" stroke-width="1"/><line x1="1041.5" y1="432" x2="1041.5" y2="946" stroke="#000"/><line x1="1041.5" y1="432" x2="1124.3" y2="946" stroke="#000" stroke-width="1.2" shape-rendering="auto"/><g shape-rendering="crispEdges"><rect x="1000.5" y="119.5" width="39" height="108" fill="#c8c8c8" stroke="#787c88"/><rect x="1006.5" y="120" width="28" height="22" fill="#b9d0fb"/><rect x="1006.5" y="120" width="28" height="22" fill="none" stroke="#787c88" stroke-width="1" /><rect x="1001" y="120" width="5" height="32" fill="#80c0bc"/><rect x="1035" y="120" width="4" height="32" fill="#80c0bc"/><line x1="1006.5" y1="120" x2="1006.5" y2="227" stroke="#909090"/><line x1="1034.5" y1="120" x2="1034.5" y2="227" stroke="#909090"/><rect x="1007" y="142" width="28" height="66" fill="#008000"/><rect x="1007" y="142" width="28" height="1" fill="#0a5a0a"/><rect x="1007" y="208" width="28" height="7" fill="#10e0f8"/><path d="M1010 209L1018 214" stroke="#208080" stroke-width="1" shape-rendering="auto"/><rect x="1007" y="215" width="28" height="4" fill="#0010c0"/><rect x="1007" y="219" width="28" height="4" fill="#a4a4a4"/><rect x="996.5" y="183.5" width="4" height="22" fill="#c8c8c8" stroke="#909090"/><rect x="993.5" y="205.5" width="7" height="2" fill="#c8c8c8" stroke="#909090"/><rect x="1035.5" y="190.5" width="6" height="8" fill="#10d8f0" stroke="#2898b0"/><rect x="1007" y="223" width="3" height="4" fill="#fff"/><rect x="1031" y="223" width="3" height="4" fill="#fff"/><rect x="1009.5" y="222.5" width="22" height="9" fill="#c8c8c8" stroke="#909090"/><rect x="999.5" y="227.5" width="9" height="3" fill="#c8c8c8" stroke="#909090"/><rect x="1032.5" y="227.5" width="8" height="3" fill="#c8c8c8" stroke="#909090"/><line x1="998" y1="233.5" x2="1042" y2="233.5" stroke="#909090"/><path d="M992 199.5L998 200.5Q1004 203 1005.5 208" stroke="#c81414" stroke-width="2.5" fill="none" shape-rendering="auto"/><rect x="1004.5" y="236.5" width="33" height="15" fill="#fff" stroke="#000"/><rect x="1005" y="237" width="32" height="14" fill="url(#xh)"/><path d="M996.5 240.5H1004.5V251.5H1038.5V240.5H1046.5V271.5H1038.5V259.5H1004.5V271.5H996.5Z" fill="#c8c8c8" stroke="#000"/><line x1="1007" y1="266.5" x2="1036" y2="266.5" stroke="#000"/></g><g font-family="Liberation Serif" font-weight="bold" font-size="11.5" fill="#cc1820" letter-spacing="-0.25" shape-rendering="auto"><text x="1057" y="182">KOBE K 13</text><text x="1051" y="247">3.50 in</text><text x="1051" y="260">1.69 kips</text></g></svg>
<div class="a" style="left:1261px;top:76px;width:18px;height:870px;background:#f0f0f0;border-left:1px solid #fafafa"></div>
<div class="a" style="left:1266px;top:84px;border-left:4px solid transparent;border-right:4px solid transparent;border-bottom:4px solid #404040"></div>
<div class="a" style="left:1263px;top:94px;width:15px;height:718px;border:1px solid #8f8f8f;border-radius:2px;background:linear-gradient(90deg,#f4f4f4 0,#e8e8e8 45%,#d6d6d6 55%,#d0d0d0 100%)"></div>
<div class="a" style="left:1266px;top:450px;width:8px;height:7px;border-top:1px solid #808080;border-bottom:1px solid #808080"><div class="a" style="left:0;top:2px;width:8px;height:1px;background:#808080"></div></div>
<div class="a" style="left:1266px;top:936px;border-left:4px solid transparent;border-right:4px solid transparent;border-top:4px solid #404040"></div>
<div class="a" style="left:787px;top:946px;width:474px;height:17px;background:#f0f0f0;border-top:1px solid #fafafa"></div>
<div class="a" style="left:793px;top:950px;border-top:4px solid transparent;border-bottom:4px solid transparent;border-right:4px solid #404040"></div>
<div class="a" style="left:805px;top:947px;width:269px;height:15px;border:1px solid #8f8f8f;border-radius:2px;background:linear-gradient(#f4f4f4 0,#e8e8e8 45%,#d6d6d6 55%,#d0d0d0 100%)"></div>
<div class="a" style="left:935px;top:951px;width:7px;height:7px;border-left:1px solid #808080;border-right:1px solid #808080"><div class="a" style="left:2px;top:0;width:1px;height:7px;background:#808080"></div></div>
<div class="a" style="left:1251px;top:950px;border-top:4px solid transparent;border-bottom:4px solid transparent;border-left:4px solid #404040"></div>
</body></html>
